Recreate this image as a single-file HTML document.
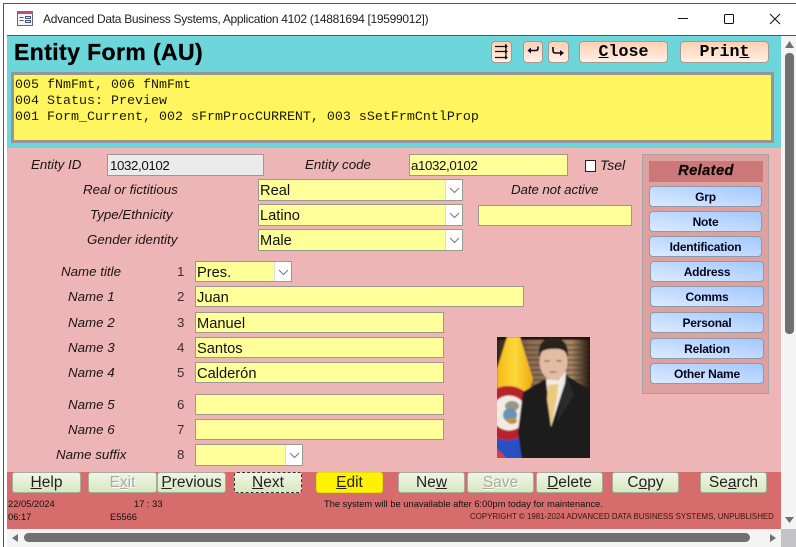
<!DOCTYPE html>
<html>
<head>
<meta charset="utf-8">
<style>
html,body{margin:0;padding:0;width:796px;height:547px;overflow:hidden;background:#fff}
body{position:relative;font-family:"Liberation Sans",Arial,sans-serif;color:#000}
div,span.a{position:absolute;box-sizing:border-box;white-space:nowrap}
.lb{font-style:italic;font-size:13.33px;color:#1c1414;line-height:16px;height:16px}
.num{font-size:13.33px;color:#3a3030;line-height:16px;height:16px}
.f{background:#FFFF99;border:1px solid #9a9a8c;font-size:14.67px;line-height:22px;padding-left:1px;color:#111}
.id{font-size:13.33px;line-height:21px;letter-spacing:-.4px}
.ar{background:#fff;top:0;right:0;width:17px;bottom:0;border-left:1px solid #ddd}
.ar svg{position:absolute;left:3px;top:6px}
.tb{border:1px solid #a39a94;border-radius:4px;top:41px;height:22px;font-family:"Liberation Mono",monospace;font-weight:bold;font-size:16.67px;line-height:21px;text-align:center;background:linear-gradient(#ffcfb2,#fff0e6)}
.rb{background:linear-gradient(to top right,#dcebff,#a2c8ff);border:1px solid #8f9aa6;border-radius:4px;height:21px;font-weight:bold;font-size:12px;line-height:20px;text-align:center;letter-spacing:-.2px;color:#05051a}
.bb{top:472px;height:21px;background:linear-gradient(#f0f5e8,#d8e8bc);border:1px solid #a7ad9c;border-radius:3px;font-size:15.5px;line-height:20px;text-align:center;color:#222}
.dis{color:#a8aca0;text-shadow:1px 1px 0 #fff}
.sm{font-size:9.33px;line-height:11px;height:11px;color:#111}
u{text-underline-offset:1px}
</style>
</head>
<body>
<!-- window frame -->
<div style="left:3px;top:3px;width:793px;height:1px;background:#a8303c"></div>
<div style="left:3px;top:3px;width:1px;height:544px;background:#a8303c"></div>
<div style="left:7px;top:35px;width:789px;height:1px;background:#a8303c"></div>

<!-- title icon -->
<svg style="position:absolute;left:17px;top:11px" width="16" height="15" viewBox="0 0 16 15">
<rect x=".5" y=".5" width="15" height="14" fill="#f2f4f8" stroke="#59688c"/>
<rect x="0" y="0" width="16" height="3" fill="#c04c7c"/>
<path d="M2.500 6.500h4M2.500 9.500h4" stroke="#44547c" fill="none"/>
<rect x="8.500" y="5.500" width="5" height="2" fill="#dfe6f3" stroke="#44547c"/>
<rect x="8.500" y="9.500" width="5" height="2" fill="#dfe6f3" stroke="#44547c"/>
</svg>
<div style="left:43px;top:11px;font-size:12px;line-height:16px;color:#222;letter-spacing:-.3px">Advanced Data Business Systems, Application 4102 (14881694 [19599012])</div>

<!-- window controls -->
<svg style="position:absolute;left:670px;top:8px" width="120" height="22" viewBox="0 0 120 22">
<path d="M8 10.500h10" stroke="#111"/>
<rect x="54.500" y="6.500" width="9" height="9" rx="1" fill="none" stroke="#111"/>
<path d="M100 6l10 10M110 6l-10 10" stroke="#111" fill="none"/>
</svg>

<!-- header -->
<div style="left:7px;top:36px;width:774px;height:112px;background:#6CD6DA"></div>
<div style="left:14px;top:39px;font-weight:bold;font-size:23px;line-height:26px;color:#000;letter-spacing:.4px;-webkit-text-stroke:.3px #000">Entity Form (AU)</div>

<div class="tb" style="left:491px;width:21px"></div>
<svg style="position:absolute;left:491px;top:41px" width="21" height="22" viewBox="0 0 21 22">
<path d="M4 5.500h11M4 10.500h11M4 16.500h11M15 3v15" stroke="#111" fill="none" stroke-width="1.200"/>
<path d="M14 3.500l3 2-3 2zM14 8.500l3 2-3 2zM14 14.500l3 2-3 2z" fill="#111"/>
</svg>
<div class="tb" style="left:523px;width:20px"></div>
<svg style="position:absolute;left:523px;top:41px" width="20" height="22" viewBox="0 0 20 22">
<path d="M15 5.500v2q0 2-2 2H7" stroke="#0a0a20" fill="none" stroke-width="1.600"/>
<path d="M8 6.500L4.500 9.500 8 12.500z" fill="#0a0a20"/>
</svg>
<div class="tb" style="left:548px;width:21px"></div>
<svg style="position:absolute;left:548px;top:41px" width="21" height="22" viewBox="0 0 21 22">
<path d="M5 6v3.500q0 2.500 2.500 2.500H13" stroke="#0a0a20" fill="none" stroke-width="1.600"/>
<path d="M12 9l4 3-4 3z" fill="#0a0a20"/>
</svg>
<div class="tb" style="left:579px;width:89px"><u>C</u>lose</div>
<div class="tb" style="left:680px;width:89px">Prin<u>t</u></div>

<div style="left:11px;top:72px;width:763px;height:71px;background:#FFF55F;border:3px solid #969696;font-family:'Liberation Mono',monospace;font-size:13.33px;line-height:16px;padding:3px 0 0 1px;color:#1a1a00">005 fNmFmt, 006 fNmFmt<br>004 Status: Preview<br>001 Form_Current, 002 sFrmProcCURRENT, 003 sSetFrmCntlProp</div>

<!-- form body -->
<div style="left:7px;top:148px;width:774px;height:324px;background:#EDB5B5"></div>

<div class="lb" style="left:31px;top:157px">Entity ID</div>
<div class="f id" style="left:107px;top:154px;width:157px;height:22px;background:#ebebeb;border-color:#999;padding-left:2px">1032,0102</div>
<div class="lb" style="left:305px;top:157px">Entity code</div>
<div class="f id" style="left:409px;top:154px;width:159px;height:22px">a1032,0102</div>
<div style="left:585px;top:160px;width:11px;height:12px;background:#fff;border:1px solid #222"></div>
<div class="lb" style="left:600px;top:157px;font-size:14px">Tsel</div>

<div class="lb" style="left:83px;top:182px">Real or fictitious</div>
<div class="f" style="left:258px;top:179px;width:205px;height:22px">Real<div class="ar"><svg width="11" height="9" viewBox="0 0 11 9"><path d="M1 2l4.500 4.500L10 2" fill="none" stroke="#777"/></svg></div></div>
<div class="lb" style="left:90px;top:207px">Type/Ethnicity</div>
<div class="f" style="left:258px;top:204px;width:205px;height:22px">Latino<div class="ar"><svg width="11" height="9" viewBox="0 0 11 9"><path d="M1 2l4.500 4.500L10 2" fill="none" stroke="#777"/></svg></div></div>
<div class="lb" style="left:87px;top:232px">Gender identity</div>
<div class="f" style="left:258px;top:229px;width:205px;height:22px">Male<div class="ar"><svg width="11" height="9" viewBox="0 0 11 9"><path d="M1 2l4.500 4.500L10 2" fill="none" stroke="#777"/></svg></div></div>

<div class="lb" style="left:511px;top:182px;letter-spacing:-.1px">Date not active</div>
<div class="f" style="left:478px;top:205px;width:154px;height:21px"></div>

<div class="lb" style="left:61px;top:264px">Name title</div>
<div class="num" style="left:177px;top:264px">1</div>
<div class="f" style="left:195px;top:261px;width:97px;height:21px;line-height:22px">Pres.<div class="ar"><svg width="11" height="9" viewBox="0 0 11 9"><path d="M1 2l4.500 4.500L10 2" fill="none" stroke="#777"/></svg></div></div>

<div class="lb" style="left:68px;top:289px">Name 1</div>
<div class="num" style="left:177px;top:289px">2</div>
<div class="f" style="left:195px;top:286px;width:329px;height:21px">Juan</div>

<div class="lb" style="left:68px;top:315px">Name 2</div>
<div class="num" style="left:177px;top:315px">3</div>
<div class="f" style="left:195px;top:312px;width:249px;height:21px">Manuel</div>

<div class="lb" style="left:68px;top:340px">Name 3</div>
<div class="num" style="left:177px;top:340px">4</div>
<div class="f" style="left:195px;top:337px;width:249px;height:21px">Santos</div>

<div class="lb" style="left:68px;top:365px">Name 4</div>
<div class="num" style="left:177px;top:365px">5</div>
<div class="f" style="left:195px;top:362px;width:249px;height:21px">Calderón</div>

<div class="lb" style="left:68px;top:397px">Name 5</div>
<div class="num" style="left:177px;top:397px">6</div>
<div class="f" style="left:195px;top:394px;width:249px;height:21px"></div>

<div class="lb" style="left:68px;top:422px">Name 6</div>
<div class="num" style="left:177px;top:422px">7</div>
<div class="f" style="left:195px;top:419px;width:249px;height:21px"></div>

<div class="lb" style="left:56px;top:447px">Name suffix</div>
<div class="num" style="left:177px;top:447px">8</div>
<div class="f" style="left:195px;top:444px;width:108px;height:22px"><div class="ar"><svg width="11" height="9" viewBox="0 0 11 9"><path d="M1 2l4.500 4.500L10 2" fill="none" stroke="#777"/></svg></div></div>

<!-- photo -->
<svg style="position:absolute;left:497px;top:337px" width="93" height="121" viewBox="0 0 93 121">
<defs>
<filter id="b" x="-5%" y="-5%" width="110%" height="110%"><feGaussianBlur stdDeviation=".7"/></filter>
<linearGradient id="bl" x1="0" x2="1" y1="0" y2="0"><stop offset="0" stop-color="#33261c"/><stop offset=".35" stop-color="#8a6c52"/><stop offset=".8" stop-color="#a88868"/><stop offset="1" stop-color="#20140c"/></linearGradient>
<linearGradient id="yl" x1="0" x2="1" y1="0" y2="0"><stop offset="0" stop-color="#f6b818"/><stop offset=".5" stop-color="#fcd83a"/><stop offset="1" stop-color="#eeaa10"/></linearGradient>
<clipPath id="c"><rect width="93" height="121"/></clipPath>
</defs>
<g clip-path="url(#c)">
<g filter="url(#b)">
<rect x="-2" y="-2" width="97" height="125" fill="#1e1410"/>
<rect x="0" y="3" width="93" height="52" fill="url(#bl)"/>
<path d="M20 8h73M20 13h73M20 18h73M20 23h73M20 28h73M20 33h73M20 38h73M20 43h73M20 48h73" stroke="#4a3426" stroke-width="1.500" opacity=".6"/>
<path d="M10 0H23L36 42 30 60H0V32z" fill="url(#yl)"/>
<path d="M-2 98H28V123H-2z" fill="#2c50c0"/>
<path d="M0 112L9 121H0z" fill="#d84030"/>
<circle cx="11" cy="76" r="27" fill="#b8222a"/>
<circle cx="12" cy="76" r="17.500" fill="#f0ece4"/>
<ellipse cx="15" cy="69" rx="7" ry="5" fill="#9a9484"/>
<ellipse cx="13" cy="78" rx="7" ry="7" fill="#6a94b4"/>
<ellipse cx="15" cy="84" rx="5" ry="3" fill="#c49040"/>
<path d="M26 55L50 41 69 38 93 53V123H25L21 95z" fill="#1e1c1f"/>
<path d="M69 38L60 85 77 58z" fill="#2c2a2d"/>
<path d="M49 42L51 38 69 35 68 46 54 90z" fill="#f0ebe4"/>
<path d="M51 48L61 47 60 60 54 90 50 62z" fill="#ecca7c"/>
<path d="M49 42L62 43 64 30H48z" fill="#c49478"/>
<ellipse cx="56.500" cy="25" rx="14" ry="18" fill="#e2bca4"/>
<path d="M42 20Q40 1 56 1 72 1 71 20 69 13 62 12 50 11 44 15z" fill="#2c241e"/>
<ellipse cx="50" cy="24" rx="3" ry=".8" fill="#8a6a58"/><ellipse cx="62" cy="24" rx="3" ry=".8" fill="#8a6a58"/>
<ellipse cx="56" cy="35" rx="4" ry="1" fill="#b88272"/>
</g>
</g>
</svg>

<!-- related panel -->
<div style="left:642px;top:154px;width:127px;height:240px;background:#DFA0A0;border:1px solid #a3a3a3"></div>
<div style="left:649px;top:161px;width:114px;height:21px;background:#CC7878;font-weight:bold;font-style:italic;font-size:14.67px;line-height:20px;text-align:center;color:#0a0505;letter-spacing:.4px;-webkit-text-stroke:.2px #000">Related</div>
<div class="rb" style="left:649px;top:186px;width:113px">Grp</div>
<div class="rb" style="left:649px;top:211px;width:113px">Note</div>
<div class="rb" style="left:649px;top:236px;width:113px">Identification</div>
<div class="rb" style="left:650px;top:261px;width:114px">Address</div>
<div class="rb" style="left:650px;top:286px;width:114px">Comms</div>
<div class="rb" style="left:650px;top:312px;width:114px">Personal</div>
<div class="rb" style="left:650px;top:338px;width:114px">Relation</div>
<div class="rb" style="left:650px;top:363px;width:114px">Other Name</div>

<!-- footer -->
<div style="left:7px;top:472px;width:774px;height:57px;background:#D66C6C"></div>
<div class="bb" style="left:12px;width:69px"><u>H</u>elp</div>
<div class="bb dis" style="left:88px;width:69px">E<u>x</u>it</div>
<div class="bb" style="left:157px;width:69px"><u>P</u>revious</div>
<div class="bb" style="left:234px;width:68px;border:1px dashed #333"><u>N</u>ext</div>
<div class="bb" style="left:316px;width:67px;background:#FFF200;border-color:#e8dc10"><u>E</u>dit</div>
<div class="bb" style="left:398px;width:67px">Ne<u>w</u></div>
<div class="bb dis" style="left:467px;width:67px"><u>S</u>ave</div>
<div class="bb" style="left:536px;width:67px"><u>D</u>elete</div>
<div class="bb" style="left:612px;width:67px">C<u>o</u>py</div>
<div class="bb" style="left:700px;width:67px">Se<u>a</u>rch</div>

<div class="sm" style="left:8px;top:499px">22/05/2024</div>
<div class="sm" style="left:134px;top:499px">17 : 33</div>
<div class="sm" style="left:8px;top:512px">06:17</div>
<div class="sm" style="left:110px;top:512px">E5566</div>
<div class="sm" style="left:324px;top:499px">The system will be unavailable after 6:00pm today for maintenance.</div>
<div class="sm" style="left:470px;top:511px;font-size:7.9px;color:#3a1414">COPYRIGHT © 1981-2024 ADVANCED DATA BUSINESS SYSTEMS, UNPUBLISHED</div>

<!-- scrollbars -->
<div style="left:781px;top:36px;width:15px;height:493px;background:#f4f4f4"></div>
<div style="left:785px;top:53px;width:9px;height:281px;background:#707070;border-radius:4px"></div>
<svg style="position:absolute;left:784px;top:40px" width="11" height="9"><path d="M1 8L5.500 1 10 8z" fill="#707070"/></svg>
<svg style="position:absolute;left:784px;top:516px" width="11" height="9"><path d="M1 1h9L5.500 7z" fill="#707070"/></svg>
<div style="left:7px;top:529px;width:774px;height:18px;background:#f4f4f4"></div>
<div style="left:24px;top:533px;width:726px;height:9px;background:#707070;border-radius:4.500px"></div>
<svg style="position:absolute;left:11px;top:533px" width="8" height="10"><path d="M7 1v8L1 5z" fill="#707070"/></svg>
<svg style="position:absolute;left:769px;top:533px" width="8" height="10"><path d="M1 1v8l6-4z" fill="#707070"/></svg>
<div style="left:781px;top:529px;width:15px;height:18px;background:#c4c4c6"></div>
</body>
</html>
